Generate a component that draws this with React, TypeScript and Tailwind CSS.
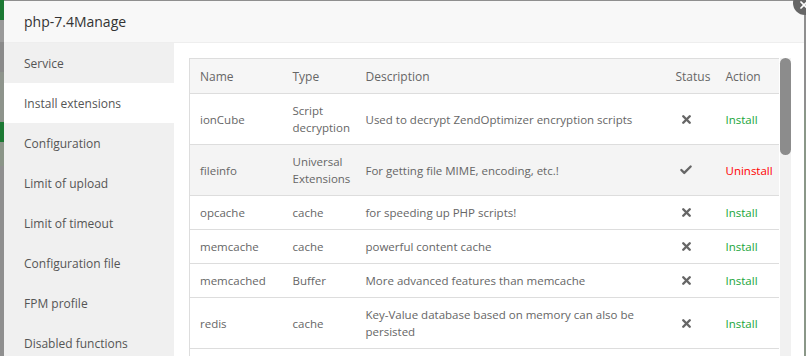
import { Check, X } from "lucide-react";

type Ext = {
  name: string;
  type: string;
  desc: string;
  installed: boolean;
};

const menu = [
  "Service",
  "Install extensions",
  "Configuration",
  "Limit of upload",
  "Limit of timeout",
  "Configuration file",
  "FPM profile",
  "Disabled functions",
];

const exts: Ext[] = [
  {
    name: "ionCube",
    type: "Script decryption",
    desc: "Used to decrypt ZendOptimizer encryption scripts",
    installed: false,
  },
  {
    name: "fileinfo",
    type: "Universal Extensions",
    desc: "For getting file MIME, encoding, etc.!",
    installed: true,
  },
  { name: "opcache", type: "cache", desc: "for speeding up PHP scripts!", installed: false },
  { name: "memcache", type: "cache", desc: "powerful content cache", installed: false },
  {
    name: "memcached",
    type: "Buffer",
    desc: "More advanced features than memcache",
    installed: false,
  },
  {
    name: "redis",
    type: "cache",
    desc: "Key-Value database based on memory can also be persisted",
    installed: false,
  },
];

export default function App() {
  return (
    <div
      className="flex h-[356px] w-[806px] overflow-hidden bg-[#8f8f8f]"
      style={{ fontFamily: '"Open Sans", sans-serif' }}
    >
      {/* dimmed page behind the dialog */}
      <div className="flex w-[4px] shrink-0 flex-col">
        <div className="h-[20px] bg-[#1d7a34]" />
        <div className="h-[22px] bg-[#9a9a9a]" />
        <div className="h-[30px] bg-[#8a8a8a]" />
        <div className="h-[50px] bg-[#8e948c]" />
        <div className="h-[20px] bg-[#1d7a34]" />
        <div className="h-[24px] bg-[#8b9588]" />
        <div className="flex-1 bg-[#8f8f8f]" />
      </div>

      <div className="relative flex w-[800px] shrink-0 flex-col border-t border-[#8f8f8f] bg-white">
        <div className="flex h-[42px] shrink-0 items-center border-b border-[#eee] bg-[#f8f8f8] pl-[20px] text-[14px] text-[#333]">
          php-7.4Manage
        </div>

        <div className="flex min-h-0 flex-1">
          <ul className="w-[170px] shrink-0 bg-[#f0f0f0] text-[12px] text-[#555]">
            {menu.map((m) => (
              <li
                key={m}
                className={`flex h-[40px] items-center pl-[20px] pt-px ${
                  m === "Install extensions" ? "bg-white" : ""
                }`}
              >
                {m}
              </li>
            ))}
          </ul>

          <div className="flex min-w-0 flex-1 pl-[15px] pt-[15px]">
            <table className="h-fit w-[589px] table-fixed border-collapse text-[11.5px] leading-[17px] text-[#666]">
              <colgroup>
                <col className="w-[93px]" />
                <col className="w-[73px]" />
                <col className="w-[310px]" />
                <col className="w-[50px]" />
                <col className="w-[63px]" />
              </colgroup>
              <thead>
                <tr className="h-[35px] bg-[#f6f6f6] text-[12px]">
                  {["Name", "Type", "Description", "Status", "Action"].map((h) => (
                    <th
                      key={h}
                      className="border-y border-[#ddd] px-[10px] text-left font-normal first:border-l"
                    >
                      {h}
                    </th>
                  ))}
                </tr>
              </thead>
              <tbody>
                {exts.map((e) => (
                  <tr
                    key={e.name}
                    className={`border-b border-[#ddd] ${e.installed ? "bg-[#f4f4f4]" : ""}`}
                  >
                    <td className="border-l border-[#ddd] px-[10px] py-[8px]">{e.name}</td>
                    <td className="px-[10px] py-[8px]">{e.type}</td>
                    <td className="px-[10px] py-[8px]">{e.desc}</td>
                    <td className="px-[10px] py-[8px]">
                      {e.installed ? (
                        <Check size={14} strokeWidth={4} className="ml-[3px] text-[#666]" />
                      ) : (
                        <X size={13} strokeWidth={4.5} className="ml-[4px] text-[#666]" />
                      )}
                    </td>
                    <td className="px-[10px] py-[8px]">
                      {e.installed ? (
                        <span className="text-[#f00]">Uninstall</span>
                      ) : (
                        <span className="text-[#20a53a]">Install</span>
                      )}
                    </td>
                  </tr>
                ))}
                <tr className="h-[30px]">
                  <td className="border-l border-[#ddd]" />
                  <td />
                  <td />
                  <td />
                  <td />
                </tr>
              </tbody>
            </table>

            <div className="ml-px h-[320px] w-[11px] shrink-0 bg-[#f1f1f1]">
              <div className="h-[97px] w-[11px] rounded-full bg-[#8c8c8c]" />
            </div>
          </div>
        </div>

        <div className="absolute -right-[13px] -top-[10px] flex h-[24px] w-[24px] items-center justify-center rounded-full bg-[#666]">
          <X size={12} strokeWidth={3.5} className="mt-[4px] mr-[2px] text-white" />
        </div>
      </div>

      <div className="flex flex-1 flex-col">
        <div className="h-[110px] bg-[#8f8f8f]" />
        <div className="flex-1 bg-[#8a9788]" />
      </div>
    </div>
  );
}
